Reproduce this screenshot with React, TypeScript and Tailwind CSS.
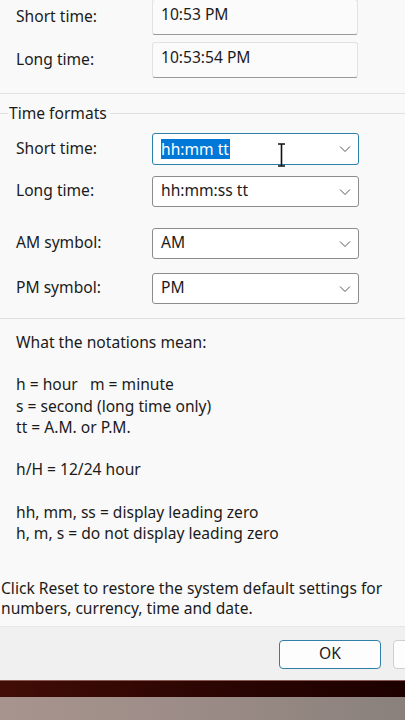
import React from "react";

const Chevron = () => (
  <svg width="12" height="8" viewBox="0 0 12 8" className="absolute right-[7px] top-1/2 -translate-y-1/2">
    <path d="M1 1.5 L6 6.5 L11 1.5" fill="none" stroke="#555" strokeWidth="1" />
  </svg>
);

function Combo({ value, active, children }: { value?: string; active?: boolean; children?: React.ReactNode }) {
  return (
    <div
      className={
        active
          ? "relative w-[207px] h-[32px] rounded-[3px] border border-[#2d7fae] bg-white flex items-center pl-2 pb-px"
          : "relative w-[207px] h-[31px] rounded-[3px] border border-[#8c8c8c] bg-white flex items-center pl-2 pb-[2px]"
      }
    >
      {children ?? <span>{value}</span>}
      <Chevron />
    </div>
  );
}

function ReadBox({ value }: { value: string }) {
  return (
    <div className="w-[206px] h-full rounded-[3px] border border-[#e2e2e2] border-b-[#9a9a9a] bg-[#fbfbfb] flex items-center pl-2 pb-[5px]">
      {value}
    </div>
  );
}

export default function App() {
  return (
    <div
      className="relative w-[405px] h-[720px] overflow-hidden bg-[#f9f9f9] text-[#1b1b1b] text-[15.6px]"
      style={{ fontFamily: '"Noto Sans", "Open Sans", sans-serif' }}
    >
      {/* previous group rows */}
      <div className="flex items-center h-[36px] -mt-px">
        <div className="w-[152px] pl-4">Short time:</div>
        <ReadBox value="10:53 PM" />
      </div>
      <div className="flex items-center h-[36px] mt-[7px]">
        <div className="w-[152px] pl-4">Long time:</div>
        <ReadBox value="10:53:54 PM" />
      </div>
      <div className="mt-[15px] h-px bg-[#e2e2e2]" />

      {/* Time formats group */}
      <div className="relative mt-[19px] border-t border-b border-[#e0e0e0] pt-[19px] pb-[14px]">
        <div className="absolute left-[8px] -top-[12px] bg-[#f9f9f9] pl-px pr-[3px] leading-[22px]">Time formats</div>
        <div className="flex items-center">
          <div className="w-[152px] pl-4 pb-px">Short time:</div>
          <Combo active>
            <span className="bg-[#0078d7] text-white leading-[20px] pr-px">hh:mm tt</span>
            <svg width="9" height="24" viewBox="0 0 9 24" className="absolute left-[124px] top-[9px]">
              <path d="M1 1 H8 M4.5 1 V23 M1 23 H8" stroke="#111" strokeWidth="1.6" fill="none" />
            </svg>
          </Combo>
        </div>
        <div className="flex items-center mt-[11px]">
          <div className="w-[152px] pl-4 pb-px">Long time:</div>
          <Combo value="hh:mm:ss tt" />
        </div>
        <div className="flex items-center mt-[21px]">
          <div className="w-[152px] pl-4 pb-px">AM symbol:</div>
          <Combo value="AM" />
        </div>
        <div className="flex items-center mt-[14px]">
          <div className="w-[152px] pl-4 pb-px">PM symbol:</div>
          <Combo value="PM" />
        </div>
      </div>

      {/* notations */}
      <div className="pl-4 mt-[13px] leading-[21.2px]">
        <div>What the notations mean:</div>
        <div>&nbsp;</div>
        <div className="whitespace-pre">h = hour   m = minute</div>
        <div>s = second (long time only)</div>
        <div>tt = A.M. or P.M.</div>
        <div>&nbsp;</div>
        <div>h/H = 12/24 hour</div>
        <div>&nbsp;</div>
        <div>hh, mm, ss = display leading zero</div>
        <div>h, m, s = do not display leading zero</div>
      </div>

      <div className="pl-px mt-[34px] leading-[20px]">
        <div>Click Reset to restore the system default settings for</div>
        <div>numbers, currency, time and date.</div>
      </div>

      {/* footer */}
      <div className="mt-[8px] h-[54px] bg-[#f0f0f0] border-t border-[#e6e6e6] flex items-start pt-[13px]">
        <div className="ml-[279px] shrink-0 w-[102px] h-[29px] rounded-[4px] border border-[#2f7fa6] bg-[#fdfdfd] flex items-center justify-center pb-px">
          OK
        </div>
        <div className="ml-[12px] w-[40px] h-[29px] rounded-[4px] border border-[#cfcfcf] bg-[#fdfdfd] shrink-0" />
      </div>

      <div className="h-[17px] bg-gradient-to-r from-[#420d06] via-[#2c0603] to-[#1c0100] border-t border-[#8a5a55]" />
      <div className="h-[30px] bg-gradient-to-r from-[#a8948f] via-[#9b8b86] to-[#8a817c]" />
    </div>
  );
}
